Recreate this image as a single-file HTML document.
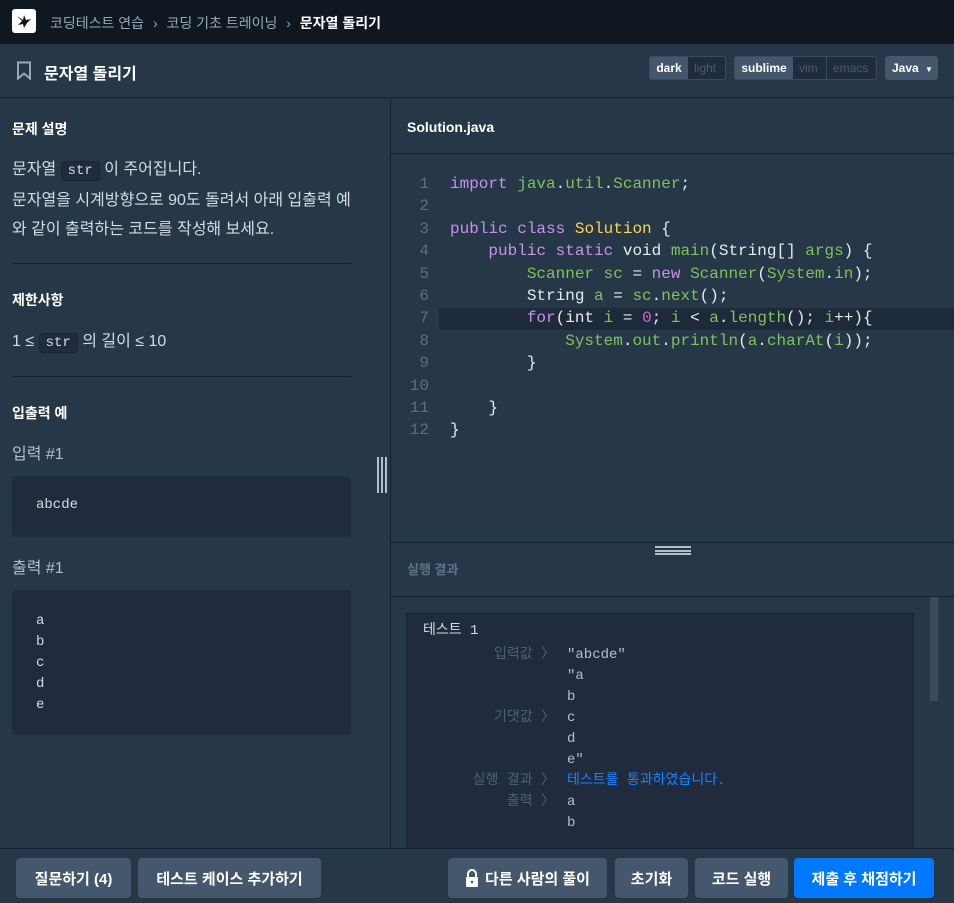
<!DOCTYPE html>
<html><head><meta charset="utf-8"><style>
*{margin:0;padding:0;box-sizing:border-box}
body{width:954px;height:903px;background:#263747;font-family:"Liberation Sans","Noto Sans CJK KR",sans-serif;position:relative;overflow:hidden;color:#d5dce3}
.a{position:absolute;white-space:nowrap}
.mono{font-family:"Liberation Mono","Noto Sans CJK KR",monospace}
.code{font-family:"Liberation Mono",monospace;font-size:16px;line-height:22.4px;color:#e6ebf0}
.k{color:#c792ea}.g{color:#7fc35a}.y{color:#ffd54f}.n{color:#d06bd0}
.cd{background:#202b3d;border:1px solid #1a2433;border-radius:4px;padding:1px 6px;font-family:"Liberation Mono",monospace;font-size:14px;color:#d5dce3}
.btn{position:absolute;top:858px;height:40px;background:#44576c;border-radius:4px;color:#fff;font-weight:bold;font-size:15px;display:flex;align-items:center;justify-content:center}
</style></head><body>
<!-- top nav -->
<div class="a" style="left:0;top:0;width:954px;height:44px;background:#0f1720"></div>
<div class="a" style="left:12px;top:9px;width:24px;height:24px;background:#fff;border-radius:3px"></div>
<svg class="a" style="left:14px;top:11px" width="20" height="20" viewBox="0 0 20 20"><path d="M3 5 L9 9 L10 4 L12 9 L17 8 L13 12 L10 17 L9 13 L4 14 L8 10 Z" fill="#0f1720"/></svg>
<div class="a" style="left:50px;top:13px;font-size:14px;color:#98a8b9">코딩테스트 연습 <span style="margin:0 5px">›</span> 코딩 기초 트레이닝 <span style="margin:0 5px">›</span> <b style="color:#fff">문자열 돌리기</b></div>
<!-- header -->
<div class="a" style="left:0;top:44px;width:954px;height:54px;border-bottom:1px solid #172030"></div>
<svg class="a" style="left:16px;top:61px" width="16" height="19" viewBox="0 0 16 19"><path d="M2 1.5 H14 V17.5 L8 12.5 L2 17.5 Z" fill="none" stroke="#98a8b9" stroke-width="2"/></svg>
<div class="a" style="left:44px;top:60px;font-size:16px;font-weight:bold;color:#fff">문자열 돌리기</div>
<div class="a" style="left:649px;top:56px;width:77px;height:24px;border:1px solid #3a4b5e;border-radius:3px;background:#202b3d;font-size:12px;font-weight:bold"><span class="a" style="left:0;top:0;width:38px;height:22px;background:#44576c;color:#fff;line-height:22px;text-align:center">dark</span><span class="a" style="left:44px;top:0;line-height:22px;color:#4a5c70;font-weight:normal">light</span></div>
<div class="a" style="left:734px;top:56px;width:143px;height:24px;border:1px solid #3a4b5e;border-radius:3px;background:#202b3d;font-size:12px"><span class="a" style="left:0;top:0;width:58px;height:22px;background:#44576c;color:#fff;line-height:22px;text-align:center;font-weight:bold">sublime</span><span class="a" style="left:64px;top:0;line-height:22px;color:#4a5c70">vim</span><span class="a" style="left:91px;top:0;width:1px;height:22px;background:#3a4b5e"></span><span class="a" style="left:98px;top:0;line-height:22px;color:#4a5c70">emacs</span></div>
<div class="a" style="left:885px;top:56px;width:53px;height:24px;background:#44576c;border-radius:3px;color:#fff;font-size:12px;font-weight:bold;line-height:24px;padding-left:7px">Java <span style="font-size:8px;margin-left:3px">▼</span></div>
<!-- left panel -->
<div class="a" style="left:390px;top:99px;width:1px;height:750px;background:#172030"></div>
<div class="a" style="left:12px;top:119px;font-size:14px;font-weight:bold;color:#fff">문제 설명</div>
<div class="a" style="left:12px;top:155px;font-size:16px;line-height:29px;color:#d5dce3">문자열 <span class="cd">str</span> 이 주어집니다.<br>문자열을 시계방향으로 90도 돌려서 아래 입출력 예<br>와 같이 출력하는 코드를 작성해 보세요.</div>
<div class="a" style="left:12px;top:263px;width:339px;height:1px;background:#172030"></div>
<div class="a" style="left:12px;top:290px;font-size:14px;font-weight:bold;color:#fff">제한사항</div>
<div class="a" style="left:12px;top:327px;font-size:16px;color:#d5dce3">1 ≤ <span class="cd">str</span> 의 길이 ≤ 10</div>
<div class="a" style="left:12px;top:376px;width:339px;height:1px;background:#172030"></div>
<div class="a" style="left:12px;top:403px;font-size:14px;font-weight:bold;color:#fff">입출력 예</div>
<div class="a" style="left:12px;top:440px;font-size:16px;color:#b2c0cc">입력 #1</div>
<div class="a" style="left:12px;top:476px;width:339px;height:61px;background:#202b3d;border-radius:4px"></div>
<div class="a mono" style="left:36px;top:497px;font-size:14px;color:#d5dce3">abcde</div>
<div class="a" style="left:12px;top:554px;font-size:16px;color:#b2c0cc">출력 #1</div>
<div class="a" style="left:12px;top:590px;width:339px;height:145px;background:#202b3d;border-radius:4px"></div>
<div class="a mono" style="left:36px;top:611px;font-size:14px;line-height:21px;color:#d5dce3">a<br>b<br>c<br>d<br>e</div>
<div class="a" style="left:377px;top:457px;width:10px;height:36px;border-left:2px solid #b2c0cc;border-right:2px solid #b2c0cc"><div style="margin-left:2px;width:2px;height:36px;background:#b2c0cc"></div></div>
<!-- right editor -->
<div class="a" style="left:391px;top:99px;width:563px;height:55px;border-bottom:1px solid #172030"></div>
<div class="a" style="left:407px;top:119px;font-size:14px;font-weight:bold;color:#fff">Solution.java</div>
<div class="a" style="left:439px;top:308px;width:515px;height:22px;background:#1e2a3a"></div>
<div class="a code" style="left:404px;top:173px;width:25px;text-align:right;color:#5d6e80">1<br>2<br>3<br>4<br>5<br>6<br>7<br>8<br>9<br>10<br>11<br>12</div>
<pre class="code" style="position:absolute;left:450px;top:173px;white-space:pre"><span class="k">import</span> <span class="g">java</span>.<span class="g">util</span>.<span class="g">Scanner</span>;

<span class="k">public</span> <span class="k">class</span> <span class="y">Solution</span> {
    <span class="k">public</span> <span class="k">static</span> void <span class="g">main</span>(String[] <span class="g">args</span>) {
        <span class="g">Scanner</span> <span class="g">sc</span> = <span class="k">new</span> <span class="g">Scanner</span>(<span class="g">System</span>.<span class="g">in</span>);
        String <span class="g">a</span> = <span class="g">sc</span>.<span class="g">next</span>();
        <span class="k">for</span>(int <span class="g">i</span> = <span class="n">0</span>; <span class="g">i</span> &lt; <span class="g">a</span>.<span class="g">length</span>(); <span class="g">i</span>++){
            <span class="g">System</span>.<span class="g">out</span>.<span class="g">println</span>(<span class="g">a</span>.<span class="g">charAt</span>(<span class="g">i</span>));
        }

    }
}</pre>
<!-- results -->
<div class="a" style="left:391px;top:542px;width:563px;height:1px;background:#172030"></div>
<div class="a" style="left:655px;top:546px;width:36px;height:9px;border-top:2px solid #b2c0cc;border-bottom:2px solid #b2c0cc"><div style="margin-top:1.5px;height:2px;background:#b2c0cc"></div></div>
<div class="a" style="left:407px;top:559px;font-size:13px;font-weight:bold;color:#5d738a">실행 결과</div>
<div class="a" style="left:391px;top:596px;width:563px;height:1px;background:#172030"></div>
<div class="a" style="left:406px;top:613px;width:508px;height:240px;background:#202b3d;border:1px solid #172030"></div>
<div class="a" style="left:930px;top:597px;width:8px;height:104px;background:#3a4b5e"></div>
<div class="a mono" style="left:423px;top:619px;font-size:14px;color:#d5dce3">테스트 1</div>
<div class="a mono" style="left:440px;top:645px;width:115px;text-align:right;font-size:14px;line-height:21px;color:#4e6073">입력값 〉<br><br><br>기댓값 〉<br><br><br>실행 결과 〉<br>출력 〉</div>
<div class="a mono" style="left:567px;top:645px;font-size:14px;line-height:21px;color:#b2c0cc">"abcde"<br>"a<br>b<br>c<br>d<br>e"<br><span style="color:#1683ff">테스트를 통과하였습니다.</span><br>a<br>b</div>
<!-- bottom bar -->
<div class="a" style="left:0;top:848px;width:954px;height:55px;background:#263747;border-top:1px solid #172030"></div>
<div class="btn" style="left:16px;width:115px">질문하기 (4)</div>
<div class="btn" style="left:138px;width:183px">테스트 케이스 추가하기</div>
<div class="btn" style="left:448px;width:159px"><svg width="14" height="20" viewBox="0 0 14 20" style="margin-right:6px"><path d="M3 9 V6 a4 4 0 0 1 8 0 V9" fill="none" stroke="#fff" stroke-width="2"/><rect x="1" y="9" width="12" height="10" rx="1" fill="#fff"/><circle cx="7" cy="14" r="1.3" fill="#44576c"/></svg>다른 사람의 풀이</div>
<div class="btn" style="left:615px;width:73px">초기화</div>
<div class="btn" style="left:695px;width:93px">코드 실행</div>
<div class="btn" style="left:794px;width:140px;background:#0078ff">제출 후 채점하기</div>
</body></html>
